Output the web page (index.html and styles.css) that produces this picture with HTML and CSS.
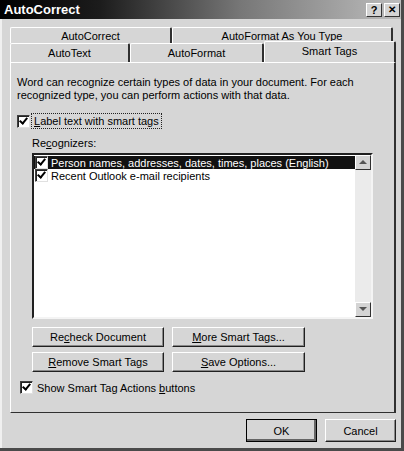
FILE: index.html
```html
<!DOCTYPE html>
<html lang="en">
<head>
    <meta charset="UTF-8">
    <title>AutoCorrect</title>
    <link rel="stylesheet" href="styles.css">
</head>
<body>
    <div class="window">
        <div class="titlebar">
            <span class="title">AutoCorrect</span>
            <div class="caption-buttons">
                <span class="caption-btn">?</span>
                <span class="caption-btn close">&#x2715;</span>
            </div>
        </div>

        <div class="content">
            <!-- zakladki, tylny rzad -->
            <div class="tab-row back">
                <div class="tab w-autocorrect">AutoCorrect</div>
                <div class="tab w-asyoutype">AutoFormat As You Type</div>
            </div>
            <!-- zakladki, przedni rzad -->
            <div class="tab-row front">
                <div class="tab w-autotext">AutoText</div>
                <div class="tab w-autoformat">AutoFormat</div>
                <div class="tab w-smarttags selected">Smart Tags</div>
            </div>

            <div class="panel">
                <p class="intro">Word can recognize certain types of data in your document. For each recognized type, you can perform actions with that data.</p>

                <div class="check-row label-row">
                    <span class="checkbox checked"></span>
                    <span class="focus"><u>L</u>abel text with smart tags</span>
                </div>

                <div class="recognizers">Re<u>c</u>ognizers:</div>

                <div class="listbox">
                    <div class="list-items">
                        <div class="list-item active">
                            <span class="checkbox checked small"></span>
                            <span>Person names, addresses, dates, times, places (English)</span>
                        </div>
                        <div class="list-item">
                            <span class="checkbox checked small"></span>
                            <span>Recent Outlook e-mail recipients</span>
                        </div>
                    </div>
                    <div class="scrollbar">
                        <span class="arrow up"></span>
                        <span class="arrow down"></span>
                    </div>
                </div>

                <div class="button-grid">
                    <div class="button">Re<u>c</u>heck Document</div>
                    <div class="button"><u>M</u>ore Smart Tags...</div>
                    <div class="button"><u>R</u>emove Smart Tags</div>
                    <div class="button"><u>S</u>ave Options...</div>
                </div>

                <div class="check-row show-row">
                    <span class="checkbox checked"></span>
                    <span>Show Smart Tag Actions <u>b</u>uttons</span>
                </div>
            </div>

            <div class="footer">
                <div class="button default">OK</div>
                <div class="button">Cancel</div>
            </div>
        </div>
    </div>
</body>
</html>
```

FILE: styles.css
```css
body {
    margin: 0;
    background-color: #d4d4d4;
    font-family: "Liberation Sans", Arial, sans-serif;
    font-size: 11px;
    color: black;
}
.window {
    width: 404px;
    height: 451px;
    box-sizing: border-box;
    display: flex;
    flex-direction: column;
    background-color: #d6d6d6;
    border-right: 3px solid #4a4a4a;
    border-bottom: 3px solid #4a4a4a;
}
/* pasek tytulu */
.titlebar {
    height: 19px;
    flex-shrink: 0;
    display: flex;
    align-items: center;
    justify-content: space-between;
    padding: 0 1px 0 4px;
    background: linear-gradient(to right, #000 0%, #1c1c1c 25%, #777 60%, #bdbdbd 100%);
}
.title {
    color: white;
    font-weight: bold;
    font-size: 13px;
}
.caption-buttons {
    display: flex;
    gap: 2px;
}
.caption-btn {
    width: 16px;
    height: 14px;
    box-sizing: border-box;
    background-color: #d4d4d4;
    border: 1px solid;
    border-color: #fff #333 #333 #fff;
    font-weight: bold;
    font-size: 11px;
    line-height: 12px;
    text-align: center;
}
.caption-btn.close {
    font-size: 10px;
}
.content {
    flex: 1;
    display: flex;
    flex-direction: column;
    padding: 8px 3px 0 10px;
    border-left: 2px solid #f0f0f0;
}
/* zakladki */
.tab-row {
    display: flex;
    margin-left: -2px;
}
.tab {
    box-sizing: border-box;
    text-align: center;
    border-top: 1px solid white;
    border-left: 1px solid white;
    border-right: 2px solid #303030;
    border-radius: 2px 2px 0 0;
}
.back .tab {
    height: 16px;
    line-height: 16px;
}
.front .tab {
    height: 19px;
    line-height: 19px;
}
.tab.selected {
    height: 21px;
    margin-top: -2px;
    margin-bottom: -1px;
    line-height: 19px;
    background-color: #d6d6d6;
    position: relative;
    z-index: 1;
}
.w-autocorrect { width: 162px; }
.w-asyoutype { width: 221px; }
.w-autotext { width: 120px; }
.w-autoformat { width: 134px; }
.w-smarttags { width: 132px; }
/* panel zakladki */
.panel {
    height: 351px;
    width: 386px;
    margin-left: -2px;
    box-sizing: border-box;
    border: 1px solid;
    border-color: white #303030 #303030 white;
    border-right-width: 2px;
    padding: 13px 0 0 6px;
}
.intro {
    margin: 0;
    width: 340px;
    line-height: 13px;
}
.check-row {
    display: flex;
    align-items: center;
}
.label-row {
    margin-top: 12px;
}
.checkbox {
    width: 13px;
    height: 13px;
    box-sizing: border-box;
    background-color: white;
    border: 1px solid;
    border-color: #404040 #e0e0e0 #e0e0e0 #404040;
    box-shadow: inset 1px 1px 0 #222;
    position: relative;
    flex-shrink: 0;
}
.checkbox.checked::after {
    content: "";
    position: absolute;
    left: 3px;
    top: 0px;
    width: 3px;
    height: 6px;
    border: solid black;
    border-width: 0 2px 2px 0;
    transform: rotate(40deg);
}
.focus {
    margin-left: 2px;
    padding: 1px 2px;
    outline: 1px dotted #222;
}
.recognizers {
    margin: 9px 0 0 15px;
}
/* lista */
.listbox {
    display: flex;
    margin: 4px 0 0 15px;
    width: 341px;
    height: 166px;
    box-sizing: border-box;
    background-color: white;
    border: 2px solid;
    border-color: #202020 #f4f4f4 #f4f4f4 #202020;
    padding: 1px 0 0 0;
}
.list-items {
    flex: 1;
}
.list-item {
    display: flex;
    align-items: center;
    height: 13px;
    padding-left: 1px;
}
.list-item span:last-child {
    margin-left: 3px;
}
.list-item.active {
    background-color: #111;
    color: white;
}
.scrollbar {
    width: 16px;
    margin-top: -1px;
    display: flex;
    flex-direction: column;
    justify-content: space-between;
    background-color: #ebebeb;
}
.arrow {
    height: 15px;
    box-sizing: border-box;
    background-color: #d4d4d4;
    border: 1px solid;
    border-color: #fff #303030 #303030 #fff;
    position: relative;
}
.arrow::after {
    content: "";
    position: absolute;
    left: 3px;
    top: 4px;
    border-left: 4px solid transparent;
    border-right: 4px solid transparent;
}
.arrow.up::after {
    border-bottom: 4px solid #555;
}
.arrow.down::after {
    border-top: 4px solid #555;
}
/* przyciski */
.button-grid {
    display: grid;
    grid-template-columns: 132px 133px;
    column-gap: 8px;
    row-gap: 5px;
    margin: 8px 0 0 15px;
}
.button {
    height: 20px;
    box-sizing: border-box;
    border: 1px solid;
    border-color: #fff #202020 #202020 #fff;
    box-shadow: inset -1px -1px 0 #888;
    display: flex;
    align-items: center;
    justify-content: center;
}
.show-row {
    margin: 9px 0 0 3px;
}
.show-row span:last-child {
    margin-left: 4px;
}
/* stopka z OK i Anuluj */
.footer {
    display: flex;
    justify-content: flex-end;
    gap: 8px;
    padding: 6px 2px 0 0;
}
.footer .button {
    width: 71px;
    height: 23px;
}
.footer .button.default {
    outline: 1px solid black;
    outline-offset: -1px;
    border-color: #fff #111 #111 #fff;
    box-shadow: inset -2px -2px 0 #666;
}
```
